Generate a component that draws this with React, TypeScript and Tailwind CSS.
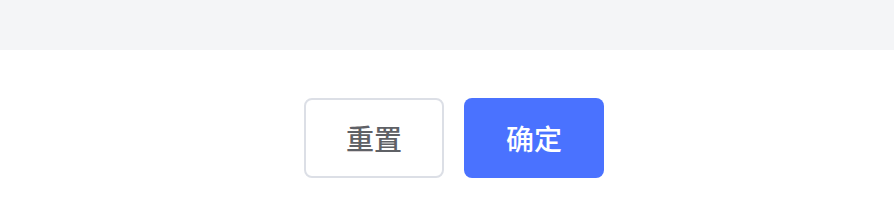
export default function App() {
  return (
    <div className="w-[894px] h-[216px] bg-white" style={{ fontFamily: '"Noto Sans CJK SC", sans-serif' }}>
      <div className="h-[50px] bg-[#f4f5f7]" />
      <div className="flex justify-center gap-5 pt-12 pl-[14px]">
        <button className="w-[140px] h-[80px] rounded-lg border-2 border-[#dcdfe6] bg-white text-[28px] font-medium text-[#5f6166]">
          重置
        </button>
        <button className="w-[140px] h-[80px] rounded-lg bg-[#4a72ff] text-[28px] font-medium text-white">
          确定
        </button>
      </div>
    </div>
  );
}
